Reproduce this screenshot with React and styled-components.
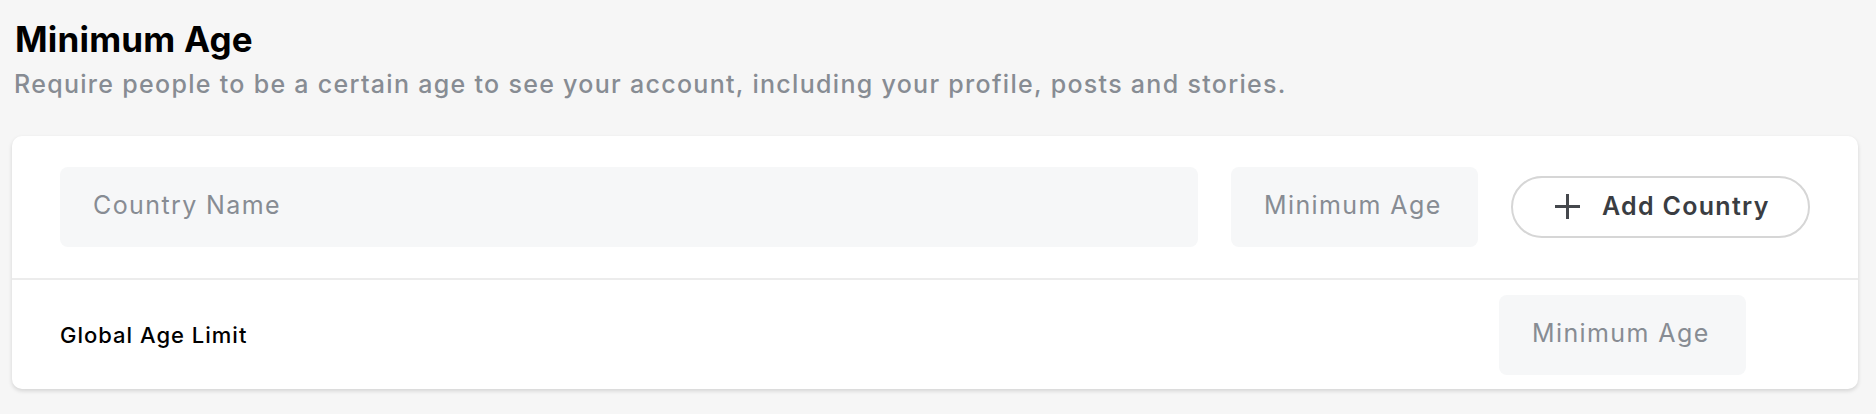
import React from 'react'
import styled, { createGlobalStyle } from 'styled-components'

const GlobalStyle = createGlobalStyle`
  * { box-sizing: border-box; }
  body {
    margin: 0;
    background: #f6f6f6;
    font-family: Inter, "Noto Sans", sans-serif;
  }
`

const Page = styled.div`
  padding: 18px 18px 24px 12px;
`

const Title = styled.h2`
  margin: 0 0 0 3px;
  font-size: 35px;
  line-height: 42px;
  font-weight: 700;
  color: #000;
  letter-spacing: 0.2px;
`

const Subtitle = styled.p`
  margin: 8px 0 0 2px;
  font-size: 25px;
  line-height: 32px;
  font-weight: 500;
  letter-spacing: 1.3px;
  color: #878c93;
`

const Card = styled.section`
  margin-top: 36px;
  background: #fff;
  border-radius: 10px;
  box-shadow: 0 2px 4px rgba(0, 0, 0, 0.14);
`

const AddRow = styled.div`
  display: flex;
  align-items: center;
  gap: 33px;
  padding: 31px 48px 31px;
  border-bottom: 2px solid #ececec;
`

const LimitRow = styled.div`
  display: flex;
  align-items: center;
  justify-content: space-between;
  padding: 15px 112px 14px 48px;
`

const Field = styled.input`
  height: 80px;
  width: ${({ $width }) => ($width ? `${$width}px` : 'auto')};
  flex: ${({ $grow }) => ($grow ? 1 : 'none')};
  min-width: 0;
  padding: 0 32px 4px 33px;
  border: none;
  border-radius: 8px;
  background: #f6f7f8;
  font-family: inherit;
  font-size: 25px;
  letter-spacing: 1.4px;
  color: #222;
  outline: none;

  &::placeholder {
    color: #878c93;
  }
`

const AddButton = styled.button`
  display: flex;
  align-items: center;
  gap: 22px;
  width: 299px;
  height: 62px;
  padding: 0 30px 2px 42px;
  border: 2px solid #d6d6d6;
  border-radius: 31px;
  background: #fff;
  font-family: inherit;
  font-size: 25px;
  font-weight: 600;
  letter-spacing: 1.3px;
  color: #3a3d42;
  cursor: pointer;
  white-space: nowrap;
`

const Label = styled.span`
  font-size: 22px;
  font-weight: 500;
  letter-spacing: 1px;
  color: #000;
`

const PlusIcon = () => (
  <svg width='25' height='25' viewBox='0 0 25 25' fill='none'>
    <path d='M12.5 0v25M0 12.5h25' stroke='#45484d' strokeWidth='3' />
  </svg>
)

export default function App() {
  return (
    <Page>
      <GlobalStyle />
      <Title>Minimum Age</Title>
      <Subtitle>
        Require people to be a certain age to see your account, including your profile, posts and stories.
      </Subtitle>
      <Card>
        <AddRow>
          <Field $grow placeholder='Country Name' />
          <Field $width={247} placeholder='Minimum Age' />
          <AddButton type='button'>
            <PlusIcon /> Add Country
          </AddButton>
        </AddRow>
        <LimitRow>
          <Label>Global Age Limit</Label>
          <Field $width={247} placeholder='Minimum Age' />
        </LimitRow>
      </Card>
    </Page>
  )
}
